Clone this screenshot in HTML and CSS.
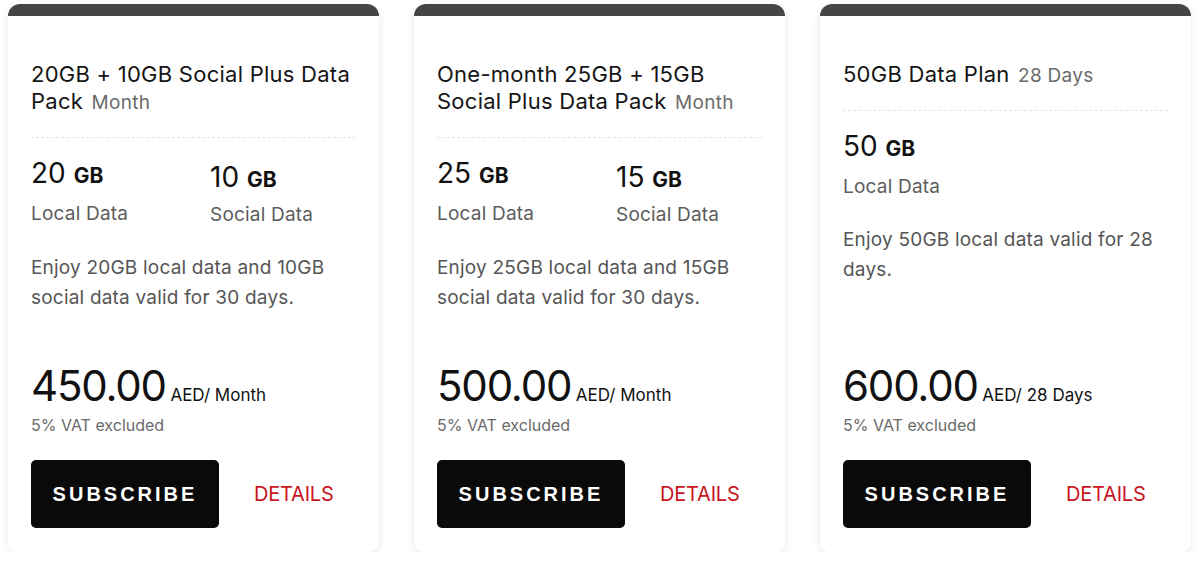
FILE: index.html
```html
<!DOCTYPE html>
<html lang="en">
<head>
    <meta charset="UTF-8">
    <meta name="viewport" content="width=device-width, initial-scale=1.0">
    <title>Data Plans</title>
    <link rel="stylesheet" href="styles.css">
</head>
<body>

    <div class="plans">

        <div class="card">
            <div class="card-bar"></div>
            <div class="card-body">
                <h2 class="plan-title">20GB + 10GB Social Plus Data Pack <span class="period">Month</span></h2>
                <hr class="divider">
                <div class="stats">
                    <div class="stat">
                        <div class="stat-value">20 <b>GB</b></div>
                        <div class="stat-label">Local Data</div>
                    </div>
                    <div class="stat stat-low">
                        <div class="stat-value">10 <b>GB</b></div>
                        <div class="stat-label">Social Data</div>
                    </div>
                </div>
                <p class="desc">Enjoy 20GB local data and 10GB social data valid for 30 days.</p>
                <div class="price"><span class="amount">450.00</span> <span class="unit">AED/ Month</span></div>
                <div class="vat">5% VAT excluded</div>
                <div class="actions">
                    <a href="#" class="subscribe">SUBSCRIBE</a>
                    <a href="#" class="details">DETAILS</a>
                </div>
            </div>
        </div>

        <div class="card">
            <div class="card-bar"></div>
            <div class="card-body">
                <h2 class="plan-title">One-month 25GB + 15GB Social Plus Data Pack <span class="period">Month</span></h2>
                <hr class="divider">
                <div class="stats">
                    <div class="stat">
                        <div class="stat-value">25 <b>GB</b></div>
                        <div class="stat-label">Local Data</div>
                    </div>
                    <div class="stat stat-low">
                        <div class="stat-value">15 <b>GB</b></div>
                        <div class="stat-label">Social Data</div>
                    </div>
                </div>
                <p class="desc">Enjoy 25GB local data and 15GB social data valid for 30 days.</p>
                <div class="price"><span class="amount">500.00</span> <span class="unit">AED/ Month</span></div>
                <div class="vat">5% VAT excluded</div>
                <div class="actions">
                    <a href="#" class="subscribe">SUBSCRIBE</a>
                    <a href="#" class="details">DETAILS</a>
                </div>
            </div>
        </div>

        <div class="card">
            <div class="card-bar"></div>
            <div class="card-body">
                <h2 class="plan-title">50GB Data Plan <span class="period">28 Days</span></h2>
                <hr class="divider">
                <div class="stats">
                    <div class="stat">
                        <div class="stat-value">50 <b>GB</b></div>
                        <div class="stat-label">Local Data</div>
                    </div>
                </div>
                <p class="desc">Enjoy 50GB local data valid for 28 days.</p>
                <div class="price"><span class="amount">600.00</span> <span class="unit">AED/ 28 Days</span></div>
                <div class="vat">5% VAT excluded</div>
                <div class="actions">
                    <a href="#" class="subscribe">SUBSCRIBE</a>
                    <a href="#" class="details">DETAILS</a>
                </div>
            </div>
        </div>

    </div>

</body>
</html>
```

FILE: styles.css
```css
body {
    font-family: Inter, "Liberation Sans", Arial, sans-serif;
    background: #ffffff;
    color: #111;
    margin: 0;
    padding: 4px 8px 0;
}
.plans {
    display: grid;
    grid-template-columns: repeat(3, 371px);
    gap: 35px;
}
.card {
    display: flex;
    flex-direction: column;
    height: 548px;
    background: #fff;
    border-radius: 12px 12px 9px 9px;
    box-shadow: 0 3px 10px rgba(0, 0, 0, 0.09);
}
.card-bar {
    height: 12px;
    background-color: #464444;
    border-radius: 12px 12px 0 0;
}
.card-body {
    flex: 1;
    display: flex;
    flex-direction: column;
    padding: 45px 23px 24px;
}
.plan-title {
    margin: 0;
    font-size: 22px;
    font-weight: 400;
    line-height: 27px;
    color: #151515;
    letter-spacing: 0.25px;
}
.period {
    font-size: 19px;
    line-height: 1;
    color: #6b6b6b;
    margin-left: 2px;
    letter-spacing: 0.3px;
}
.divider {
    border: none;
    border-top: 1px dashed #e4e4e4;
    margin: 22px 0 19px;
}
.stats {
    display: grid;
    grid-template-columns: 179px 1fr;
}
.stat-value {
    font-size: 28px;
    line-height: 33px;
    color: #111;
}
.stat-value b {
    font-size: 21px;
    font-weight: 700;
}
.stat-low .stat-value {
    padding-top: 7px;
    line-height: 26px;
}
.stat-label {
    font-size: 19px;
    line-height: 24px;
    margin-top: 10px;
    color: #5c5c5c;
    letter-spacing: 0.2px;
}
.desc {
    margin: 26px 0 0;
    font-size: 19px;
    line-height: 30px;
    color: #555;
    letter-spacing: 0.2px;
}
.price {
    margin-top: auto;
    line-height: 38px;
}
.amount {
    font-size: 42px;
    letter-spacing: -1.2px;
    color: #111;
}
.unit {
    font-size: 17px;
    color: #111;
}
.vat {
    font-size: 16px;
    line-height: 22px;
    color: #6a6a6a;
}
.actions {
    display: flex;
    align-items: center;
    gap: 35px;
    margin-top: 24px;
}
.subscribe {
    display: inline-flex;
    justify-content: center;
    align-items: center;
    width: 188px;
    height: 68px;
    background: #0a0a0a;
    color: #fff;
    border-radius: 5px;
    text-decoration: none;
    font-family: "Liberation Sans", Arial, sans-serif;
    font-weight: 700;
    font-size: 20px;
    letter-spacing: 3px;
}
.details {
    color: #c8151f;
    text-decoration: none;
    font-size: 20px;
    letter-spacing: -0.2px;
}
```
